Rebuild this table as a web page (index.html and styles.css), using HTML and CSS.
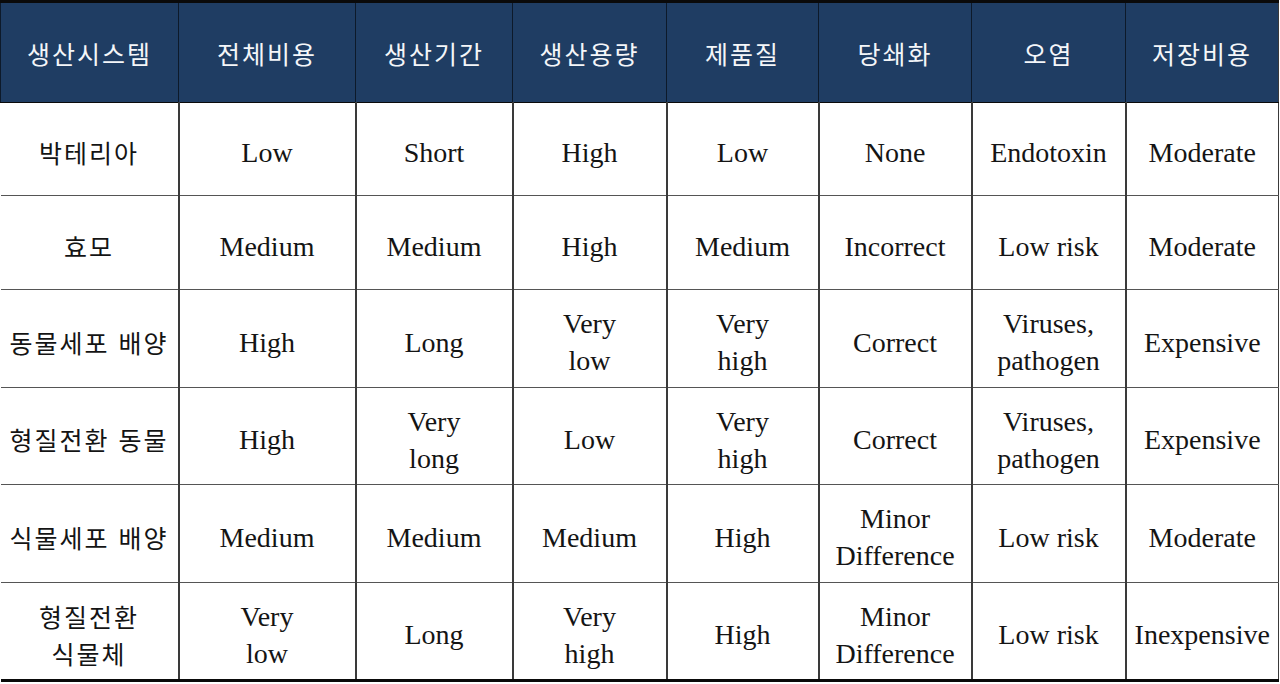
FILE: index.html
```html
<!DOCTYPE html>
<html lang="ko">
<head>
<meta charset="utf-8">
<title>생산시스템 비교</title>
<link rel="stylesheet" href="styles.css">
</head>
<body>
<table class="cmp">
  <colgroup>
    <col class="c1"><col class="c2"><col class="c3"><col class="c4">
    <col class="c5"><col class="c6"><col class="c7"><col class="c8">
  </colgroup>
  <thead>
    <tr>
      <th>생산시스템</th><th>전체비용</th><th>생산기간</th><th>생산용량</th>
      <th>제품질</th><th>당쇄화</th><th>오염</th><th>저장비용</th>
    </tr>
  </thead>
  <tbody>
    <tr>
      <td class="ko">박테리아</td><td>Low</td><td>Short</td><td>High</td>
      <td>Low</td><td>None</td><td>Endotoxin</td><td>Moderate</td>
    </tr>
    <tr>
      <td class="ko">효모</td><td>Medium</td><td>Medium</td><td>High</td>
      <td>Medium</td><td>Incorrect</td><td>Low risk</td><td>Moderate</td>
    </tr>
    <tr>
      <td class="ko">동물세포 배양</td><td>High</td><td>Long</td><td>Very<br>low</td>
      <td>Very<br>high</td><td>Correct</td><td>Viruses,<br>pathogen</td><td>Expensive</td>
    </tr>
    <tr>
      <td class="ko">형질전환 동물</td><td>High</td><td>Very<br>long</td><td>Low</td>
      <td>Very<br>high</td><td>Correct</td><td>Viruses,<br>pathogen</td><td>Expensive</td>
    </tr>
    <tr>
      <td class="ko">식물세포 배양</td><td>Medium</td><td>Medium</td><td>Medium</td>
      <td>High</td><td>Minor<br>Difference</td><td>Low risk</td><td>Moderate</td>
    </tr>
    <tr>
      <td class="ko">형질전환<br>식물체</td><td>Very<br>low</td><td>Long</td><td>Very<br>high</td>
      <td>High</td><td>Minor<br>Difference</td><td>Low risk</td><td>Inexpensive</td>
    </tr>
  </tbody>
</table>
</body>
</html>
```
FILE: styles.css
```css
html, body {
  margin: 0;
  padding: 0;
  background: #ffffff;
}

.cmp {
  border-collapse: collapse;
  table-layout: fixed;
  width: 1278px;
  border-top: 3px solid #0a0a0a;
  border-bottom: 3px solid #0a0a0a;
}

.c1 { width: 178px; }
.c2 { width: 177px; }
.c3 { width: 157px; }
.c4 { width: 154px; }
.c5 { width: 152px; }
.c6 { width: 153px; }
.c7 { width: 154px; }
.c8 { width: 153px; }

.cmp th {
  background: #1f3d63;
  color: #f4f6f9;
  font-family: "Noto Sans CJK KR", "Noto Sans", sans-serif;
  font-weight: 400;
  font-size: 25px;
  letter-spacing: 2px;
  height: 99px;
  padding: 0;
  text-align: center;
  vertical-align: middle;
  border-left: 1px solid #0d1a2a;
  border-right: 1px solid #0d1a2a;
  border-bottom: 1px solid #0a0a0a;
}

.cmp td {
  font-family: "Liberation Serif", "Times New Roman", serif;
  font-size: 28px;
  line-height: 37px;
  color: #141414;
  text-align: center;
  vertical-align: middle;
  padding: 7px 0 0 0;
  border-left: 2px solid #3a3a3a;
  border-right: 2px solid #3a3a3a;
  border-top: 1px solid #555;
  border-bottom: 1px solid #555;
}

.cmp td:first-child { border-left: none; }
.cmp th:last-child, .cmp td:last-child { border-right: 1px solid #3a3a3a; }

.cmp td.ko {
  font-family: "Noto Sans CJK KR", "Noto Sans", sans-serif;
  font-size: 25px;
  letter-spacing: 2px;
}

.cmp tbody tr:nth-child(1) td { height: 85px; }
.cmp tbody tr:nth-child(2) td { height: 86px; }
.cmp tbody tr:nth-child(3) td { height: 90px; }
.cmp tbody tr:nth-child(4) td { height: 89px; }
.cmp tbody tr:nth-child(5) td { height: 90px; }
.cmp tbody tr:nth-child(6) td { height: 89px; }
```
